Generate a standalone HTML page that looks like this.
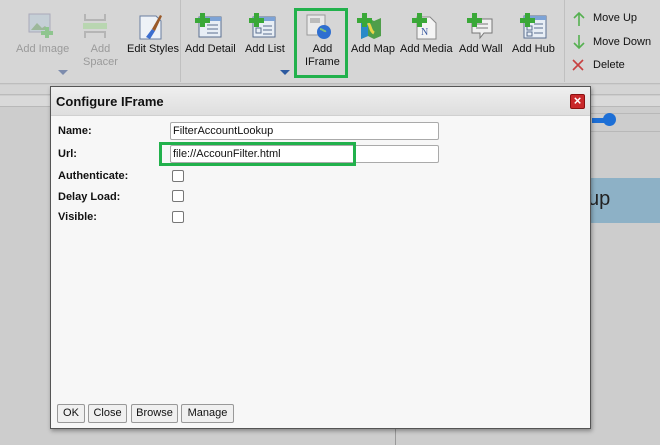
<!DOCTYPE html>
<html><head><style>
*{margin:0;padding:0;box-sizing:border-box}
body{width:660px;height:445px;overflow:hidden;background:#cdcdcd;font-family:"Liberation Sans",sans-serif;position:relative}
.a{position:absolute}
.tb{left:0;top:0;width:660px;height:84px;background:#d6d6d6;border-bottom:1px solid #bdbdbd}
.lbl{position:absolute;font-size:11px;color:#111;text-align:center;white-space:nowrap;line-height:13px}
.dis{color:#9a9a9a}
.ic{position:absolute}
.sep{position:absolute;top:0;width:1px;height:82px;background:#c0c0c0}
.tri{position:absolute;width:0;height:0;border-left:5px solid transparent;border-right:5px solid transparent;border-top:5px solid #2d5aa0}
.dlg{left:50px;top:86px;width:541px;height:343px;background:#f7f7f7;border:1px solid #555;box-shadow:1px 2px 4px rgba(0,0,0,.35)}
.tt{left:0;top:0;width:539px;height:29px;background:linear-gradient(#efefef,#dedede);border-bottom:1px solid #d0d0d0;font-weight:bold;font-size:13px;line-height:29px;padding-left:5px;color:#111}
.fl{font-size:11px;font-weight:bold;color:#111;position:absolute;left:7px}
.inp{position:absolute;left:119px;width:269px;height:18px;background:#fff;border:1px solid #aaa;border-radius:2px;font-size:11px;line-height:16px;padding-left:2px;color:#111}
.cb{position:absolute;left:121px;width:12px;height:12px;border:1px solid #777;border-radius:2px;background:#fff}
.btn{position:absolute;top:317px;height:19px;border:1px solid #999;border-radius:2px;background:#f0f0f0;font-size:11px;line-height:17px;text-align:center;color:#111}
</style></head><body>
<div class="a tb"></div>
<div class="sep" style="left:180px"></div>
<div class="sep" style="left:564px"></div>
<!-- disabled -->
<svg class="ic" style="left:28px;top:13px" width="26" height="26"><rect x="1" y="1" width="21" height="18" fill="#c5cfd6" stroke="#aab"/><path d="M3 17l6-7 5 5 3-2 4 4z" fill="#9cb89a"/><rect x="17" y="14" width="4" height="11" fill="#8fc58f"/><rect x="13" y="18" width="12" height="4" fill="#8fc58f"/></svg>
<div class="lbl dis" style="left:16px;top:43px">Add Image</div>
<div class="tri" style="left:58px;top:70px;border-top-color:#7d8cad"></div>
<svg class="ic" style="left:82px;top:12px" width="26" height="28"><path d="M3 2v6h20V2M3 26v-6h20v6" fill="none" stroke="#b5b5b5" stroke-width="2"/><rect x="1" y="11" width="24" height="6" fill="#b9d6b1"/></svg>
<div class="lbl dis" style="left:83px;top:43px">Add<br>Spacer</div>
<svg class="ic" style="left:138px;top:13px" width="26" height="28"><path d="M2 3h16l5 5v18H2z" fill="#eef2f7" stroke="#6a7fa0"/><path d="M8 24l6-8 3 2-5 8z" fill="#3c6ecf"/><path d="M14 16l8-14 2 1-7 15z" fill="#9a5a2a"/></svg>
<div class="lbl" style="left:127px;top:43px">Edit Styles</div>
<!-- add detail/list -->
<svg class="ic" style="left:195px;top:13px" width="28" height="26"><rect x="4" y="4" width="22" height="20" fill="#e8eef5" stroke="#5a6f90"/><rect x="4" y="4" width="22" height="4" fill="#7da3d6"/><path d="M12 12h11M12 16h11M12 20h11" stroke="#5a6f90"/><rect x="5" y="0" width="5" height="14" fill="#3aa838"/><rect x="0" y="5" width="15" height="5" fill="#3aa838"/></svg>
<div class="lbl" style="left:185px;top:43px">Add Detail</div>
<svg class="ic" style="left:249px;top:13px" width="28" height="26"><rect x="4" y="4" width="22" height="20" fill="#e8eef5" stroke="#5a6f90"/><rect x="4" y="4" width="22" height="4" fill="#7da3d6"/><rect x="7" y="15" width="5" height="5" fill="none" stroke="#5a6f90"/><path d="M14 13h9M14 17h9M14 21h9" stroke="#5a6f90"/><rect x="5" y="0" width="5" height="14" fill="#3aa838"/><rect x="0" y="5" width="15" height="5" fill="#3aa838"/></svg>
<div class="lbl" style="left:245px;top:43px">Add List</div>
<div class="tri" style="left:280px;top:70px"></div>
<div class="a" style="left:294px;top:8px;width:54px;height:70px;border:3px solid #22b14c"></div>
<svg class="ic" style="left:305px;top:13px" width="28" height="28"><rect x="2" y="2" width="18" height="20" fill="#e9e9e9" stroke="#999"/><rect x="5" y="5" width="10" height="5" fill="#bbb"/><circle cx="19" cy="19" r="7" fill="#2f6fd0"/><path d="M15 16c3 0 4 3 6 2" stroke="#7fc07f" stroke-width="2" fill="none"/></svg>
<div class="lbl" style="left:305px;top:43px">Add<br>IFrame</div>
<svg class="ic" style="left:357px;top:13px" width="28" height="28"><path d="M4 8l7-3 6 3 7-3v18l-7 3-6-3-7 3z" fill="#4f9e4a"/><path d="M4 8l7-3v18l-7 3z" fill="#2a8ac8"/><path d="M11 10c3 3 2 8 6 10" stroke="#e8d44a" stroke-width="3" fill="none"/><rect x="5" y="0" width="5" height="14" fill="#3aa838"/><rect x="0" y="5" width="15" height="5" fill="#3aa838"/></svg>
<div class="lbl" style="left:351px;top:43px">Add Map</div>
<svg class="ic" style="left:412px;top:13px" width="28" height="28"><path d="M5 4h13l6 6v16H5z" fill="#f4f4f4" stroke="#888"/><text x="9" y="22" font-size="10" fill="#3a5aa0" font-family="Liberation Serif">N</text><rect x="5" y="0" width="5" height="14" fill="#3aa838"/><rect x="0" y="5" width="15" height="5" fill="#3aa838"/></svg>
<div class="lbl" style="left:400px;top:43px">Add Media</div>
<svg class="ic" style="left:467px;top:13px" width="28" height="28"><path d="M5 6h20v14h-8l-4 5v-5H5z" fill="#f0f0f0" stroke="#777"/><path d="M9 11h12M9 15h12" stroke="#777"/><rect x="5" y="0" width="5" height="14" fill="#3aa838"/><rect x="0" y="5" width="15" height="5" fill="#3aa838"/></svg>
<div class="lbl" style="left:459px;top:43px">Add Wall</div>
<svg class="ic" style="left:520px;top:13px" width="28" height="28"><rect x="4" y="3" width="22" height="22" fill="#e8eef5" stroke="#5a6f90"/><rect x="4" y="3" width="22" height="4" fill="#7da3d6"/><rect x="7" y="13" width="5" height="4" fill="none" stroke="#5a6f90"/><rect x="7" y="19" width="5" height="4" fill="none" stroke="#5a6f90"/><path d="M14 11h9M14 15h9M14 20h9" stroke="#5a6f90"/><rect x="5" y="0" width="5" height="14" fill="#3aa838"/><rect x="0" y="5" width="15" height="5" fill="#3aa838"/></svg>
<div class="lbl" style="left:512px;top:43px">Add Hub</div>
<svg class="ic" style="left:572px;top:11px" width="14" height="16"><path d="M7 15V2M2 7l5-5 5 5" stroke="#55b050" stroke-width="1.6" fill="none"/></svg>
<div class="lbl" style="left:593px;top:12px">Move Up</div>
<svg class="ic" style="left:572px;top:34px" width="14" height="16"><path d="M7 1v13M2 9l5 5 5-5" stroke="#55b050" stroke-width="1.6" fill="none"/></svg>
<div class="lbl" style="left:593px;top:36px">Move Down</div>
<svg class="ic" style="left:572px;top:59px" width="12" height="12"><path d="M1 1l10 10M11 1L1 11" stroke="#c84040" stroke-width="1.6"/></svg>
<div class="lbl" style="left:593px;top:59px">Delete</div>
<!-- background area -->
<div class="a" style="left:0;top:85px;width:660px;height:10px;background:#d4d4d4;border-bottom:1px solid #bbb"></div>
<div class="a" style="left:0;top:106px;width:660px;height:1px;background:#b8b8b8"></div>
<div class="a" style="left:0;top:96px;width:660px;height:10px;background:#d9d9d9"></div>
<div class="a" style="left:590px;top:113px;width:70px;height:1px;background:#b8b8b8"></div>
<div class="a" style="left:590px;top:131px;width:70px;height:1px;background:#b8b8b8"></div>
<div class="a" style="left:592px;top:118px;width:20px;height:5px;background:#1d6fd6"></div>
<div class="a" style="left:603px;top:113px;width:13px;height:13px;border-radius:50%;background:#1d6fd6"></div>
<div class="a" style="left:590px;top:178px;width:70px;height:45px;background:#8db1c6"></div>
<div class="a" style="left:588px;top:188px;font-size:20px;color:#222">up</div>
<div class="a" style="left:395px;top:428px;width:1px;height:17px;background:#999"></div>
<!-- dialog -->
<div class="a dlg">
 <div class="a tt">Configure IFrame</div>
 <div class="a" style="left:519px;top:7px;width:15px;height:15px;background:#c9282a;border:1px solid #8a1010;border-radius:2px;color:#fff;font-size:13px;line-height:12px;text-align:center;font-weight:bold">×</div>
 <div class="fl" style="top:38px">Name:</div>
 <div class="fl" style="top:61px">Url:</div>
 <div class="fl" style="top:83px">Authenticate:</div>
 <div class="fl" style="top:104px">Delay Load:</div>
 <div class="fl" style="top:124px">Visible:</div>
 <div class="inp" style="top:35px">FilterAccountLookup</div>
 <div class="inp" style="top:58px">file://AccounFilter.html</div>
 <div class="a" style="left:108px;top:55px;width:197px;height:24px;border:3px solid #22b14c"></div>
 <div class="cb" style="top:83px"></div>
 <div class="cb" style="top:103px"></div>
 <div class="cb" style="top:124px"></div>
 <div class="btn" style="left:6px;width:28px">OK</div>
 <div class="btn" style="left:37px;width:39px">Close</div>
 <div class="btn" style="left:80px;width:47px">Browse</div>
 <div class="btn" style="left:130px;width:53px">Manage</div>
</div>
</body></html>
